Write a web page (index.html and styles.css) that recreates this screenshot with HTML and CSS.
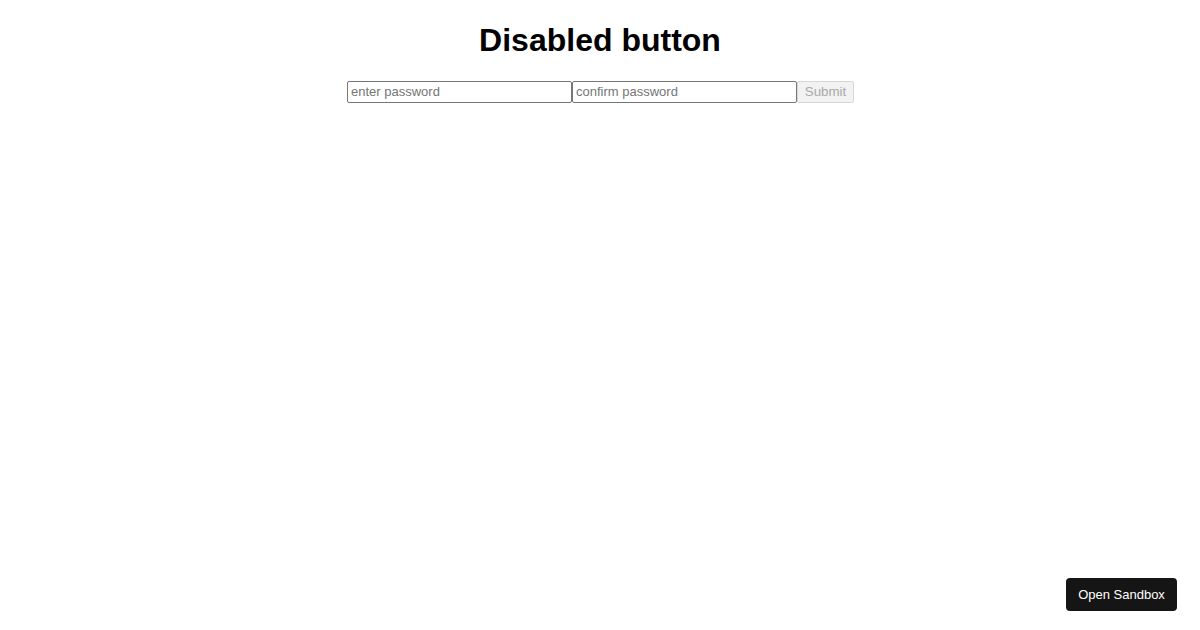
FILE: index.html
```html
<!DOCTYPE html>
<html>
<head>
<meta charset="utf-8">
<link rel="stylesheet" href="styles.css">
</head>
<body>
<h1 class="title">Disabled button</h1>
<form class="row">
  <input class="field" type="password" placeholder="enter password">
  <input class="field" type="password" placeholder="confirm password">
  <button class="submit" type="button" disabled>Submit</button>
</form>
<a class="sandbox">Open Sandbox</a>
</body>
</html>
```
FILE: styles.css
```css
html, body {
  margin: 0;
  padding: 0;
  background: #ffffff;
}
body {
  font-family: "Liberation Sans", Arial, sans-serif;
  color: #000;
}
.title {
  margin: 22px 0 0;
  font-size: 32px;
  font-weight: bold;
  line-height: 37px;
  text-align: center;
}
.row {
  display: flex;
  justify-content: center;
  margin: 22px 0 0 1px;
}
.field {
  box-sizing: border-box;
  width: 225px;
  height: 22px;
  margin: 0;
  padding: 0 3px 2px;
  border: 1px solid #767676;
  border-radius: 2px;
  font-family: "Liberation Sans", Arial, sans-serif;
  font-size: 13px;
  color: #000;
  background: #fff;
}
.field::placeholder {
  color: #757575;
}
.submit {
  box-sizing: border-box;
  width: 57px;
  height: 22px;
  margin: 0;
  padding: 0 6px 2px;
  border: 1px solid #d6d6d6;
  border-radius: 2px;
  background: #f2f2f2;
  color: #a9a9a9;
  font-family: "Liberation Sans", Arial, sans-serif;
  font-size: 13.33px;
}
.sandbox {
  position: fixed;
  right: 23px;
  bottom: 19px;
  box-sizing: border-box;
  width: 111px;
  height: 33px;
  display: flex;
  align-items: center;
  justify-content: center;
  background: #151515;
  color: #fff;
  border-radius: 4px;
  font-size: 13px;
  font-family: "Liberation Sans", Arial, sans-serif;
}
```
